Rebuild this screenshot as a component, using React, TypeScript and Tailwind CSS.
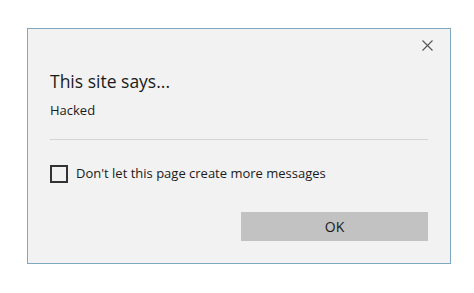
import React from 'react'

export default function App() {
  return (
    <div className="w-[474px] h-[293px] bg-white pt-[28px] pl-[27px]" style={{ fontFamily: '"Segoe UI", "Open Sans", "Noto Sans", sans-serif' }}>
      <div className="w-[424px] h-[236px] border border-[#7fa8bf] bg-[#f2f2f2] flex flex-col">
        <div className="flex justify-end pt-[11px] pr-[17px] h-[32px]">
          <svg width="11" height="11" viewBox="0 0 11 11" className="text-[#555]">
            <path d="M0.5 0.5 L10.5 10.5 M10.5 0.5 L0.5 10.5" stroke="currentColor" strokeWidth="1.1" fill="none" />
          </svg>
        </div>
        <div className="px-[22px]">
          <h1 className="text-[17.5px] leading-[26px] text-[#1a1a1a] mt-[7px]">This site says...</h1>
          <p className="text-[13px] leading-[20px] text-[#1a1a1a] mt-[6px]">Hacked</p>
          <div className="border-b border-[#d4d4d4] mt-[19px]"></div>
          <label className="flex items-center gap-[8px] mt-[24px]">
            <span className="w-[18px] h-[18px] border-2 border-[#333] bg-[#f2f2f2]"></span>
            <span className="text-[13px] text-[#1a1a1a]">Don't let this page create more messages</span>
          </label>
          <div className="flex justify-end mt-[28px]">
            <button className="w-[187px] h-[29px] bg-[#c2c2c2] text-[14px] text-[#1a1a1a]">OK</button>
          </div>
        </div>
      </div>
    </div>
  )
}
